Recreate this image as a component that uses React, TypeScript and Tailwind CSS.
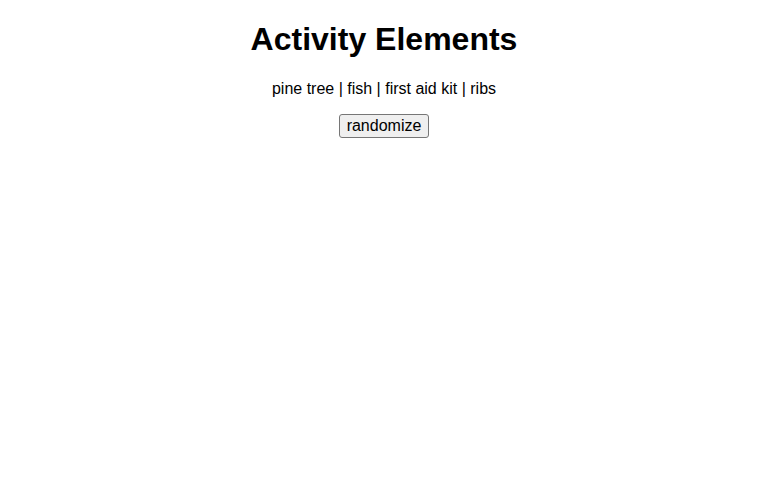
const items = ["pine tree", "fish", "first aid kit", "ribs"];

export default function App() {
  return (
    <div className="min-h-[480px] bg-white text-center text-black font-['Liberation_Sans',Arial,sans-serif]">
      <h1 className="pt-[21px] text-[32px] leading-[37px] font-bold">Activity Elements</h1>
      <p className="mt-[22px] text-base leading-[18px]">{items.join(" | ")}</p>
      <div className="mt-4">
        <button
          type="button"
          className="h-6 rounded-[3px] border border-[#767676] bg-[#efefef] px-[7px] text-base leading-[18px] text-black"
        >
          randomize
        </button>
      </div>
    </div>
  );
}
